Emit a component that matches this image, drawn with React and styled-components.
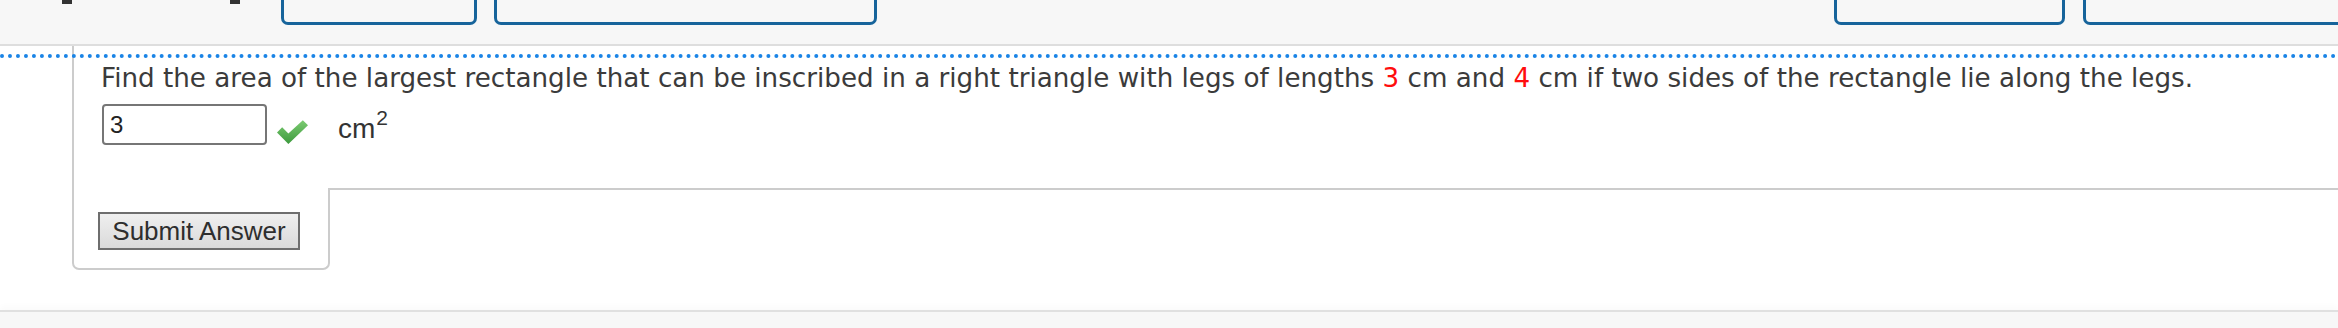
import styled, { createGlobalStyle } from "styled-components";

const GlobalStyle = createGlobalStyle`
  html, body {
    margin: 0;
    padding: 0;
    background: #ffffff;
    overflow: hidden;
  }
  body {
    font-family: "DejaVu Sans", Verdana, sans-serif;
  }
`;

const Page = styled.div`
  width: 2338px;
  height: 328px;
  display: flex;
  flex-direction: column;
  overflow: hidden;
`;

const TopBar = styled.div`
  height: 44px;
  flex-shrink: 0;
  background: #f7f7f7;
  border-bottom: 2px solid #dedede;
  display: flex;
  align-items: flex-start;
  padding-left: 62px;
  overflow: hidden;
`;

const Mark = styled.span`
  flex-shrink: 0;
  width: 10px;
  height: 4px;
  background: #333333;
  margin-left: ${(p) => p.$gap || 0}px;
`;

const NavButton = styled.div`
  flex-shrink: 0;
  box-sizing: border-box;
  height: 25px;
  width: ${(p) => p.$w}px;
  margin-left: ${(p) => (p.$auto ? "auto" : `${p.$gap || 0}px`)};
  margin-right: ${(p) => p.$mr || 0}px;
  border: 3px solid #17649b;
  border-top: none;
  border-radius: 0 0 7px 7px;
  background: #f7f7f7;
`;

const Main = styled.div`
  position: relative;
  padding-left: 72px;
  flex-shrink: 0;
`;

const FocusLine = styled.div`
  position: absolute;
  top: 8px;
  left: 0;
  right: 0;
  border-top: 4px dotted #1a84e6;
  pointer-events: none;
`;

const ProblemBody = styled.div`
  box-sizing: border-box;
  height: 142px;
  border-left: 2px solid #cccccc;
  padding: 17px 0 0 27px;
`;

const Statement = styled.p`
  margin: 0;
  font-family: "DejaVu Sans", Verdana, sans-serif;
  font-size: 26.2px;
  line-height: 30px;
  color: #3b3b3b;
  white-space: nowrap;
`;

const Given = styled.span`
  color: #ff0d0d;
`;

const AnswerRow = styled.div`
  display: flex;
  align-items: center;
  margin-top: 11px;
  margin-left: 1px;
`;

const AnswerInput = styled.input`
  box-sizing: border-box;
  width: 165px;
  height: 41px;
  border: 2px solid #767676;
  border-radius: 4px;
  padding: 0 6px;
  font-family: "Liberation Sans", Arial, sans-serif;
  font-size: 24px;
  color: #222222;
  background: #ffffff;
  outline: none;
`;

const Check = styled.svg`
  width: 31px;
  height: 25px;
  margin: 14px 0 0 10px;
  flex-shrink: 0;
`;

const Unit = styled.span`
  margin-left: 30px;
  font-family: "Liberation Sans", Arial, sans-serif;
  font-size: 28px;
  color: #333333;
  margin-top: 8px;

  sup {
    font-size: 21px;
    vertical-align: 0;
    position: relative;
    top: -13px;
    margin-left: 1px;
  }
`;

const LowerRow = styled.div`
  display: flex;
  align-items: flex-start;
`;

const SubmitTab = styled.div`
  box-sizing: border-box;
  width: 258px;
  height: 82px;
  flex-shrink: 0;
  border: 2px solid #cccccc;
  border-top: none;
  border-radius: 0 0 7px 7px;
  padding: 24px 0 0 24px;
`;

const SubmitButton = styled.button`
  box-sizing: border-box;
  width: 202px;
  height: 38px;
  padding: 0;
  border: 2px solid #6e6e6e;
  border-radius: 0;
  background: linear-gradient(#efefef, #dadada);
  font-family: "Liberation Sans", Arial, sans-serif;
  font-size: 26px;
  color: #2e2e2e;
  cursor: pointer;
`;

const TabFiller = styled.div`
  flex: 1;
  border-top: 2px solid #cccccc;
`;

const Footer = styled.div`
  margin-top: 40px;
  flex: 1;
  background: #f7f7f7;
  border-top: 2px solid #e0e0e0;
  box-shadow: 0 -4px 6px rgba(0, 0, 0, 0.02);
`;

export default function App() {
  return (
    <Page>
      <GlobalStyle />
      <TopBar>
        <Mark />
        <Mark $gap={158} />
        <NavButton $w={196} $gap={41} />
        <NavButton $w={383} $gap={17} />
        <NavButton $w={231} $auto />
        <NavButton $w={262} $gap={18} $mr={-7} />
      </TopBar>

      <Main>
        <FocusLine />
        <ProblemBody>
          <Statement>
            Find the area of the largest rectangle that can be inscribed in a
            right triangle with legs of lengths <Given>3</Given> cm and{" "}
            <Given>4</Given> cm if two sides of the rectangle lie along the legs.
          </Statement>
          <AnswerRow>
            <AnswerInput defaultValue="3" />
            <Check viewBox="0 0 30 24">
              <defs>
                <linearGradient id="ok" x1="0" y1="0" x2="0" y2="1">
                  <stop offset="0" stopColor="#7ccb72" />
                  <stop offset="1" stopColor="#3d9a3d" />
                </linearGradient>
              </defs>
              <polygon
                points="0,13 5,8 11,14 25,1 30,6 11,24"
                fill="url(#ok)"
              />
            </Check>
            <Unit>
              cm<sup>2</sup>
            </Unit>
          </AnswerRow>
        </ProblemBody>
        <LowerRow>
          <SubmitTab>
            <SubmitButton type="button">Submit Answer</SubmitButton>
          </SubmitTab>
          <TabFiller />
        </LowerRow>
      </Main>

      <Footer />
    </Page>
  );
}
